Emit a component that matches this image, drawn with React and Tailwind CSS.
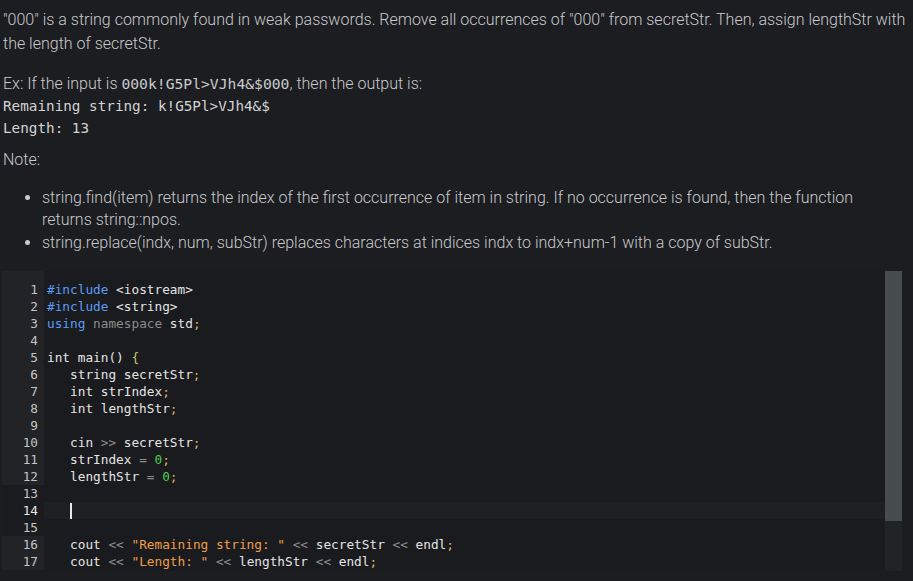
import React from "react";

const mono = "font-['DejaVu_Sans_Mono','Liberation_Mono',monospace]";

// token helpers
const t = (text, c = "text-[#e4e4e4]") => ({ text, c });
const kw = (text) => t(text, "text-[#5b9cf4]");
const op = (text) => t(text, "text-[#8c8c8c]");
const semi = () => t(";", "text-[#d6b36c]");
const num = (text) => t(text, "text-[#4ccf4c]");
const str = (text) => t(text, "text-[#f09e4a]");

const codeLines = [
  [kw("#include"), t(" <iostream>")],
  [kw("#include"), t(" <string>")],
  [kw("using"), t(" "), op("namespace"), t(" std"), semi()],
  [],
  [t("int main() "), t("{", "text-[#cdc46a]")],
  [t("   string secretStr"), semi()],
  [t("   int strIndex"), semi()],
  [t("   int lengthStr"), semi()],
  [],
  [t("   cin "), op(">>"), t(" secretStr"), semi()],
  [t("   strIndex "), op("="), t(" "), num("0"), semi()],
  [t("   lengthStr "), op("="), t(" "), num("0"), semi()],
  [],
  [t("   ")],
  [],
  [t("   cout "), op("<<"), t(" "), str("\"Remaining string: \""), t(" "), op("<<"), t(" secretStr "), op("<<"), t(" endl"), semi()],
  [t("   cout "), op("<<"), t(" "), str("\"Length: \""), t(" "), op("<<"), t(" lengthStr "), op("<<"), t(" endl"), semi()],
];

const lockedLines = [13, 14, 15];

export default function App() {
  return (
    <div className="w-[913px] h-[581px] overflow-hidden bg-[#1c1d20] font-['Roboto','Liberation_Sans',sans-serif] font-light text-[#c9cacd]">
      {/* Prompt text */}
      <div className="pl-[3px] pr-[6px] pt-[8px] text-[16px]">
        <p className="leading-[24px]">
          "000" is a string commonly found in weak passwords. Remove all occurrences of "000" from secretStr. Then, assign lengthStr with the length of secretStr.
        </p>
        <p className="mt-[16px] leading-[24px]">
          Ex: If the input is{" "}
          <span className={`${mono} text-[14.7px] leading-[0] font-normal`}>000k!G5Pl&gt;VJh4&amp;$000</span>, then the output is:
        </p>
        <pre className={`${mono} -mt-[1px] text-[14.3px] leading-[22px] font-normal text-[#d2d3d5]`}>
          {"Remaining string: k!G5Pl>VJh4&$\nLength: 13"}
        </pre>
        <p className="mt-[9px] leading-[24px]">Note:</p>
        <ul className="mt-[15px] pl-[39px] pr-[50px] list-disc leading-[22px] marker:text-[#c9cacd]">
          <li>
            string.find(item) returns the index of the first occurrence of item in string. If no occurrence is found, then the function returns string::npos.
          </li>
          <li className="mt-[1px]">
            string.replace(indx, num, subStr) replaces characters at indices indx to indx+num-1 with a copy of subStr.
          </li>
        </ul>
      </div>

      {/* Code editor */}
      <div className="ml-[2px] mt-[17px] w-[900px] h-[300px] flex bg-[#1a1b1e]">
        <div className="flex-1 flex">
          {/* gutter */}
          <div className={`w-[42px] flex flex-col ${mono} text-[12.75px] leading-[17px] text-[#c3c4c6]`}>
            <div className="h-[10px] bg-[#212326]" />
            {codeLines.map((_, i) => (
              <div
                key={i}
                className={`h-[17px] pr-[6px] text-right ${
                  lockedLines.includes(i + 1) ? "bg-[#1a1b1e]" : "bg-[#212326]"
                } ${i + 1 === 14 ? "text-[#e6e6e6]" : ""}`}
              >
                {i + 1}
              </div>
            ))}
          </div>
          {/* code */}
          <div className={`flex-1 flex flex-col ${mono} text-[12.75px] leading-[17px] whitespace-pre`}>
            <div className="h-[10px]" />
            {codeLines.map((line, i) => (
              <div
                key={i}
                className={`h-[17px] pl-[3px] flex items-center ${
                  i + 1 === 14 ? "bg-[#1e1f22]" : ""
                }`}
              >
                {line.map((tok, j) => (
                  <span key={j} className={tok.c}>
                    {tok.text}
                  </span>
                ))}
                {i + 1 === 14 && <span className="w-[2px] h-[16px] bg-[#e6e6e6]" />}
              </div>
            ))}
          </div>
        </div>
        {/* scrollbar */}
        <div className="w-[17px] flex flex-col bg-[#202425]">
          <div className="h-[250px] bg-[#474c4f]" />
        </div>
      </div>
    </div>
  );
}
